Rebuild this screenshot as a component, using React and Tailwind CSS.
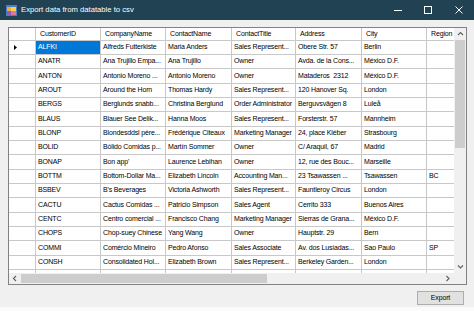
import React from "react";

const widths = [65, 65, 66, 64, 66, 65, 70];
const headers = ["CustomerID", "CompanyName", "ContactName", "ContactTitle", "Address", "City", "Region"];
const rows = [
  ["ALFKI", "Alfreds Futterkiste", "Maria Anders", "Sales Represent...", "Obere Str. 57", "Berlin", ""],
  ["ANATR", "Ana Trujillo Empa...", "Ana Trujillo", "Owner", "Avda. de la Cons...", "México D.F.", ""],
  ["ANTON", "Antonio Moreno ...", "Antonio Moreno", "Owner", "Mataderos  2312", "México D.F.", ""],
  ["AROUT", "Around the Horn", "Thomas Hardy", "Sales Represent...", "120 Hanover Sq.", "London", ""],
  ["BERGS", "Berglunds snabb...", "Christina Berglund", "Order Administrator", "Berguvsvägen 8", "Luleå", ""],
  ["BLAUS", "Blauer See Delik...", "Hanna Moos", "Sales Represent...", "Forsterstr. 57", "Mannheim", ""],
  ["BLONP", "Blondesddsl père...", "Frédérique Citeaux", "Marketing Manager", "24, place Kléber", "Strasbourg", ""],
  ["BOLID", "Bólido Comidas p...", "Martín Sommer", "Owner", "C/ Araquil, 67", "Madrid", ""],
  ["BONAP", "Bon app'", "Laurence Lebihan", "Owner", "12, rue des Bouc...", "Marseille", ""],
  ["BOTTM", "Bottom-Dollar Ma...", "Elizabeth Lincoln", "Accounting Man...", "23 Tsawassen ...", "Tsawassen", "BC"],
  ["BSBEV", "B's Beverages", "Victoria Ashworth", "Sales Represent...", "Fauntleroy Circus", "London", ""],
  ["CACTU", "Cactus Comidas ...", "Patricio Simpson", "Sales Agent", "Cerrito 333", "Buenos Aires", ""],
  ["CENTC", "Centro comercial ...", "Francisco Chang", "Marketing Manager", "Sierras de Grana...", "México D.F.", ""],
  ["CHOPS", "Chop-suey Chinese", "Yang Wang", "Owner", "Hauptstr. 29", "Bern", ""],
  ["COMMI", "Comércio Mineiro", "Pedro Afonso", "Sales Associate", "Av. dos Lusíadas...", "Sao Paulo", "SP"],
  ["CONSH", "Consolidated Hol...", "Elizabeth Brown", "Sales Represent...", "Berkeley Garden...", "London", ""],
  ["", "", "", "", "", "", ""],
];

const font = { fontFamily: '"Liberation Sans", Arial, sans-serif' };

function Chevron({ dir }) {
  const pts = {
    up: "1,4 3.5,1.5 6,4",
    down: "1,1.5 3.5,4 6,1.5",
    left: "4,1 1.5,3.5 4,6",
    right: "1.5,1 4,3.5 1.5,6",
  }[dir];
  const vert = dir === "up" || dir === "down";
  return (
    <svg width={vert ? 7 : 6} height={vert ? 6 : 7} viewBox={vert ? "0 0 7 6" : "0 0 6 7"}>
      <polyline points={pts} fill="none" stroke="#606060" strokeWidth="1.1" />
    </svg>
  );
}

export default function App() {
  return (
    <div className="w-[474px] h-[311px] bg-[#f0f0f0] flex flex-col overflow-hidden" style={font}>
      {/* title bar */}
      <div className="h-[20px] shrink-0 bg-[#204253] flex items-center">
        <div className="ml-[5px] w-[12px] h-[12px] flex items-center justify-center">
          <svg width="11" height="11" viewBox="0 0 11 11">
            <rect x="0" y="0" width="11" height="11" fill="#4f7ac4" />
            <rect x="1" y="2" width="4" height="4" fill="#f2a93b" />
            <rect x="5" y="2" width="5" height="4" fill="#f4d54b" />
            <rect x="1" y="6" width="4" height="4" fill="#8a5fc0" />
            <rect x="5" y="6" width="5" height="4" fill="#e57890" />
          </svg>
        </div>
        <span className="ml-[4px] text-white text-[7.7px] leading-none">Export data from datatable to csv</span>
        <div className="ml-auto flex h-full">
          <div className="w-[30px] h-full flex items-center justify-center">
            <svg width="8" height="8" viewBox="0 0 8 8">
              <line x1="0" y1="4.5" x2="8" y2="4.5" stroke="#fff" strokeWidth="1" />
            </svg>
          </div>
          <div className="w-[30px] h-full flex items-center justify-center">
            <svg width="8" height="8" viewBox="0 0 8 8">
              <rect x="0.5" y="0.5" width="7" height="7" fill="none" stroke="#fff" strokeWidth="1" />
            </svg>
          </div>
          <div className="w-[31px] h-full flex items-center justify-center">
            <svg width="8" height="8" viewBox="0 0 8 8">
              <line x1="0.5" y1="0.5" x2="7.5" y2="7.5" stroke="#fff" strokeWidth="1" />
              <line x1="7.5" y1="0.5" x2="0.5" y2="7.5" stroke="#fff" strokeWidth="1" />
            </svg>
          </div>
        </div>
      </div>

      {/* client */}
      <div className="flex-1 flex flex-col pt-[7px] pl-[8px]">
        <div className="w-[459px] h-[258px] border border-[#828282] flex flex-col bg-white">
          <div className="flex h-[245px]">
            {/* cells */}
            <div className="w-[445px] h-full overflow-hidden text-[7px] tracking-[-0.15px] text-black">
              {/* header */}
              <div className="flex h-[12.7px] border-b border-[#c8c8c8]">
                <div className="w-[27px] shrink-0 border-r border-[#c8c8c8]" />
                {headers.map((h, i) => (
                  <div
                    key={h}
                    style={{ width: widths[i] }}
                    className="shrink-0 border-r border-[#c8c8c8] flex items-center pl-[4px] whitespace-nowrap overflow-hidden"
                  >
                    {h}
                  </div>
                ))}
              </div>
              {rows.map((r, ri) => (
                <div key={ri} className="flex h-[14.33px] border-b border-[#c8c8c8]">
                  <div className="w-[27px] shrink-0 border-r border-[#c8c8c8] flex items-center pl-[5px]">
                    {ri === 0 && (
                      <svg width="3" height="5" viewBox="0 0 3 5">
                        <polygon points="0,0 3,2.5 0,5" fill="#000" />
                      </svg>
                    )}
                  </div>
                  {r.map((c, ci) => (
                    <div
                      key={ci}
                      style={{ width: widths[ci] }}
                      className={
                        ri === 0 && ci === 0
                          ? "shrink-0 border-r border-[#c8c8c8] flex items-center pl-[2px] whitespace-pre overflow-hidden bg-[#0078d7] text-white"
                          : "shrink-0 border-r border-[#c8c8c8] flex items-center pl-[2px] whitespace-pre overflow-hidden"
                      }
                    >
                      {c}
                    </div>
                  ))}
                </div>
              ))}
            </div>
            {/* vertical scrollbar */}
            <div className="w-[12px] h-full bg-[#f0f0f0] flex flex-col items-center">
              <div className="h-[12px] w-full flex items-center justify-center">
                <Chevron dir="up" />
              </div>
              <div className="flex-1 w-full px-[1px]">
                <div className="w-full h-[108px] bg-[#cdcdcd]" />
              </div>
              <div className="h-[12px] w-full flex items-center justify-center">
                <Chevron dir="down" />
              </div>
            </div>
          </div>
          {/* horizontal scrollbar */}
          <div className="flex h-[11px] bg-[#f0f0f0]">
            <div className="w-[445px] flex items-center">
              <div className="w-[12px] h-full flex items-center justify-center">
                <Chevron dir="left" />
              </div>
              <div className="flex-1 h-full py-[1px]">
                <div className="w-[246px] h-full bg-[#cdcdcd]" />
              </div>
              <div className="w-[12px] h-full flex items-center justify-center">
                <Chevron dir="right" />
              </div>
            </div>
            <div className="w-[12px] h-full bg-[#f0f0f0]" />
          </div>
        </div>
        <div className="flex justify-end pr-[10px] pt-[6px]">
          <div className="w-[47px] h-[14px] border border-[#adadad] bg-[#e1e1e1] flex items-center justify-center text-[7px] tracking-[-0.15px] text-black">
            Export
          </div>
        </div>
      </div>
      <div className="h-[4px] shrink-0 bg-[#fbfbfb]" />
    </div>
  );
}
